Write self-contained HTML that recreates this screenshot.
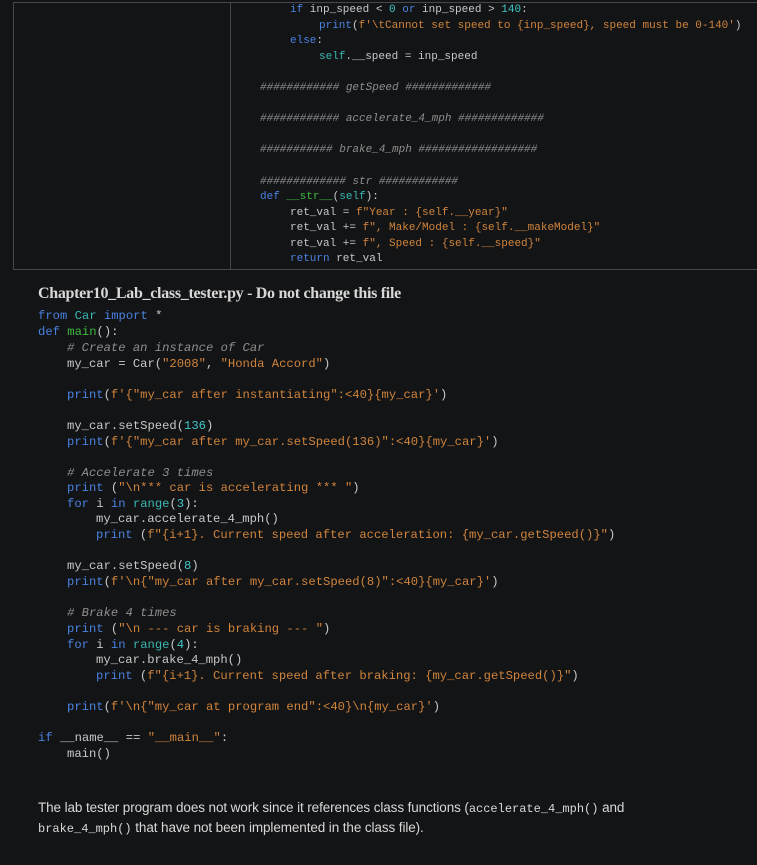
<!DOCTYPE html>
<html><head><meta charset="utf-8"><style>
html,body{margin:0;padding:0;background:#131416;width:757px;height:865px;overflow:hidden;position:relative}
.box{position:absolute;left:13px;top:2px;width:760px;height:268px;border:1px solid #47484b;box-sizing:border-box}
.div{position:absolute;left:230px;top:2px;width:1px;height:268px;background:#47484b}
.l{position:absolute;white-space:pre;font-family:"Liberation Mono",monospace;color:#c8c8c8;line-height:16px}
.t{font-size:11px}
.b{font-size:12.2px}
.k{color:#4a82e0}.s{color:#d0843c}.n{color:#40c8c8}.c{color:#8e8e8e;font-style:italic}.g{color:#3fbb40}.y{color:#3ab7b0}
h{position:absolute;left:38px;top:285px;font-family:"Liberation Serif",serif;font-weight:bold;font-size:16px;color:#d8d8d8;letter-spacing:-0.3px;white-space:pre}
p{position:absolute;left:38px;margin:0;font-family:"Liberation Sans",sans-serif;font-size:13.5px;color:#d8d8d8;letter-spacing:-0.1px;white-space:pre;line-height:20px}
p code{font-family:"Liberation Mono",monospace;font-size:12px;letter-spacing:0}
</style></head><body>
<div class="box"></div><div class="div"></div>
<div class="l t" style="left:290px;top:2px"><span class="k">if</span> inp_speed &lt; <span class="n">0</span> <span class="k">or</span> inp_speed &gt; <span class="n">140</span>:</div>
<div class="l t" style="left:319px;top:17.5px"><span class="k">print</span>(<span class="s">f'\tCannot set speed to {inp_speed}, speed must be 0-140'</span>)</div>
<div class="l t" style="left:290px;top:33px"><span class="k">else</span>:</div>
<div class="l t" style="left:319px;top:49px"><span class="y">self</span>.__speed = inp_speed</div>
<div class="l t c" style="left:260px;top:80px">############ getSpeed #############</div>
<div class="l t c" style="left:260px;top:111px">############ accelerate_4_mph #############</div>
<div class="l t c" style="left:260px;top:142px">########### brake_4_mph ##################</div>
<div class="l t c" style="left:260px;top:174px">############# str ############</div>
<div class="l t" style="left:260px;top:189px"><span class="k">def</span> <span class="g">__str__</span>(<span class="y">self</span>):</div>
<div class="l t" style="left:290px;top:205px">ret_val = <span class="s">f"Year : {self.__year}"</span></div>
<div class="l t" style="left:290px;top:220px">ret_val += <span class="s">f", Make/Model : {self.__makeModel}"</span></div>
<div class="l t" style="left:290px;top:236px">ret_val += <span class="s">f", Speed : {self.__speed}"</span></div>
<div class="l t" style="left:290px;top:251px"><span class="k">return</span> ret_val</div>

<h>Chapter10_Lab_class_tester.py - Do not change this file</h>

<div class="l b" style="left:38px;top:308px"><span class="k">from</span> <span class="y">Car</span> <span class="k">import</span> *</div>
<div class="l b" style="left:38px;top:324px"><span class="k">def</span> <span class="g">main</span>():</div>
<div class="l b c" style="left:67px;top:340px"># Create an instance of Car</div>
<div class="l b" style="left:67px;top:356px">my_car = Car(<span class="s">"2008"</span>, <span class="s">"Honda Accord"</span>)</div>
<div class="l b" style="left:67px;top:387px"><span class="k">print</span>(<span class="s">f'{"my_car after instantiating":&lt;40}{my_car}'</span>)</div>
<div class="l b" style="left:67px;top:418px">my_car.setSpeed(<span class="n">136</span>)</div>
<div class="l b" style="left:67px;top:434px"><span class="k">print</span>(<span class="s">f'{"my_car after my_car.setSpeed(136)":&lt;40}{my_car}'</span>)</div>
<div class="l b c" style="left:67px;top:465px"># Accelerate 3 times</div>
<div class="l b" style="left:67px;top:480px"><span class="k">print</span> (<span class="s">"\n*** car is accelerating *** "</span>)</div>
<div class="l b" style="left:67px;top:496px"><span class="k">for</span> i <span class="k">in</span> <span class="y">range</span>(<span class="n">3</span>):</div>
<div class="l b" style="left:96px;top:511px">my_car.accelerate_4_mph()</div>
<div class="l b" style="left:96px;top:527px"><span class="k">print</span> (<span class="s">f"{i+1}. Current speed after acceleration: {my_car.getSpeed()}"</span>)</div>
<div class="l b" style="left:67px;top:558px">my_car.setSpeed(<span class="n">8</span>)</div>
<div class="l b" style="left:67px;top:574px"><span class="k">print</span>(<span class="s">f'\n{"my_car after my_car.setSpeed(8)":&lt;40}{my_car}'</span>)</div>
<div class="l b c" style="left:67px;top:605px"># Brake 4 times</div>
<div class="l b" style="left:67px;top:621px"><span class="k">print</span> (<span class="s">"\n --- car is braking --- "</span>)</div>
<div class="l b" style="left:67px;top:637px"><span class="k">for</span> i <span class="k">in</span> <span class="y">range</span>(<span class="n">4</span>):</div>
<div class="l b" style="left:96px;top:652px">my_car.brake_4_mph()</div>
<div class="l b" style="left:96px;top:668px"><span class="k">print</span> (<span class="s">f"{i+1}. Current speed after braking: {my_car.getSpeed()}"</span>)</div>
<div class="l b" style="left:67px;top:699px"><span class="k">print</span>(<span class="s">f'\n{"my_car at program end":&lt;40}\n{my_car}'</span>)</div>
<div class="l b" style="left:38px;top:730px"><span class="k">if</span> __name__ == <span class="s">"__main__"</span>:</div>
<div class="l b" style="left:67px;top:746px">main()</div>

<p style="top:798px">The lab tester program does not work since it references class functions (<code>accelerate_4_mph()</code> and</p>
<p style="top:818px"><code>brake_4_mph()</code> that have not been implemented in the class file).</p>
</body></html>
